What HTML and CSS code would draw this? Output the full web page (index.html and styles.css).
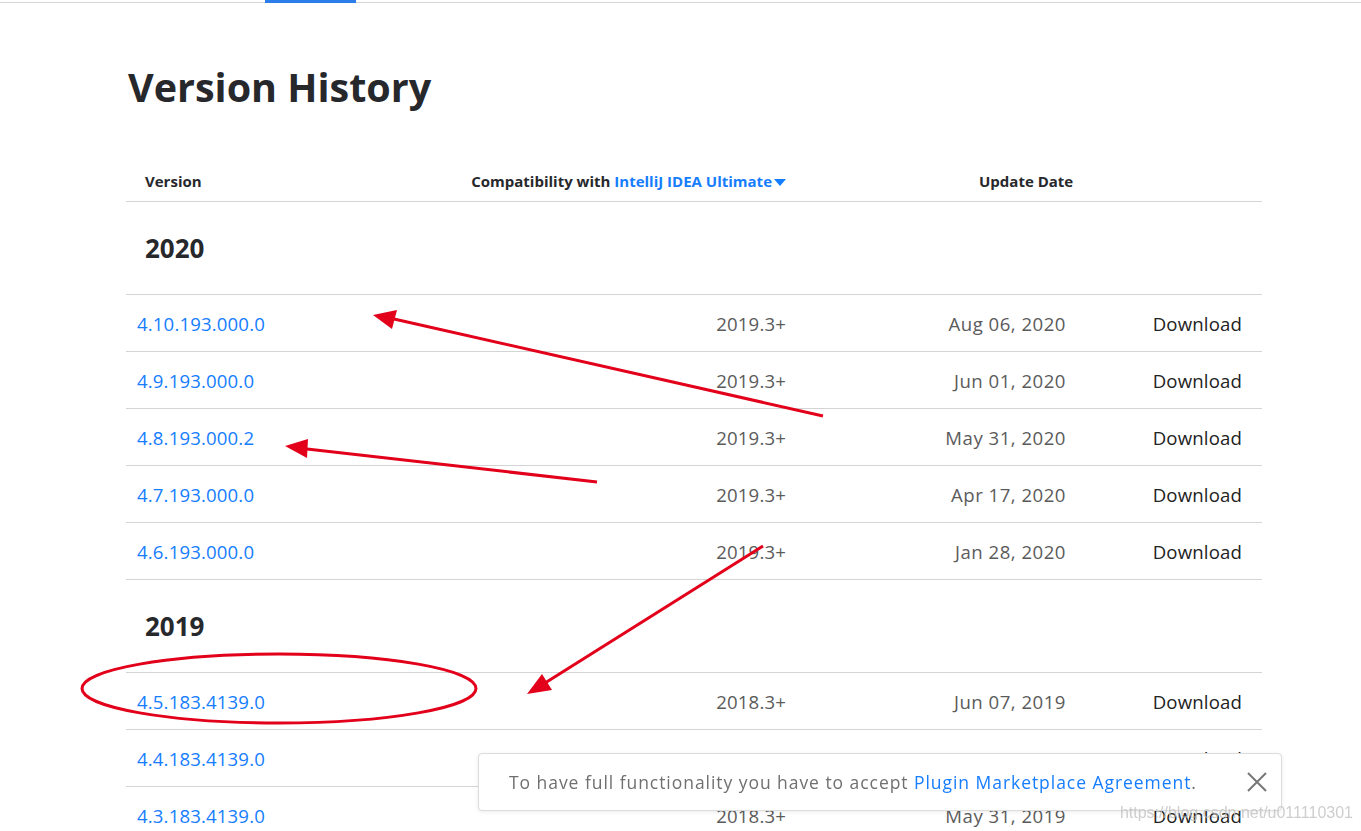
FILE: index.html
```html
<!DOCTYPE html>
<html lang="en">
<head>
<meta charset="utf-8">
<title>Version History</title>
<link rel="stylesheet" href="styles.css">
</head>
<body>
<nav class="topnav"><span class="tab"></span></nav>
<main class="main">
  <h1 class="title">Version History</h1>
  <div class="vtable">
    <div class="head">
      <div class="h-version">Version</div>
      <div class="h-compat">Compatibility with <a class="blue">IntelliJ IDEA Ultimate</a><span class="caret"></span></div>
      <div class="h-date">Update Date</div>
    </div>
    <div class="year">2020</div>
    <div class="row"><a class="ver">4.10.193.000.0</a><span class="compat">2019.3+</span><span class="date">Aug 06, 2020</span><span class="dl">Download</span></div>
    <div class="row"><a class="ver">4.9.193.000.0</a><span class="compat">2019.3+</span><span class="date">Jun 01, 2020</span><span class="dl">Download</span></div>
    <div class="row"><a class="ver">4.8.193.000.2</a><span class="compat">2019.3+</span><span class="date">May 31, 2020</span><span class="dl">Download</span></div>
    <div class="row"><a class="ver">4.7.193.000.0</a><span class="compat">2019.3+</span><span class="date">Apr 17, 2020</span><span class="dl">Download</span></div>
    <div class="row"><a class="ver">4.6.193.000.0</a><span class="compat">2019.3+</span><span class="date">Jan 28, 2020</span><span class="dl">Download</span></div>
    <div class="year">2019</div>
    <div class="row"><a class="ver">4.5.183.4139.0</a><span class="compat">2018.3+</span><span class="date">Jun 07, 2019</span><span class="dl">Download</span></div>
    <div class="row"><a class="ver">4.4.183.4139.0</a><span class="compat">2018.3+</span><span class="date">Jun 01, 2019</span><span class="dl">Download</span></div>
    <div class="row"><a class="ver">4.3.183.4139.0</a><span class="compat">2018.3+</span><span class="date">May 31, 2019</span><span class="dl">Download</span></div>
  </div>
</main>

<div class="notice">
  <span class="notice-text">To have full functionality you have to accept <a class="blue">Plugin Marketplace Agreement</a>.</span>
  <svg class="close" width="20" height="20" viewBox="0 0 20 20"><path d="M1 1 L19 19 M19 1 L1 19" stroke="#777" stroke-width="2" fill="none"/></svg>
</div>

<div class="watermark">https://blog.csdn.net/u011110301</div>

<svg class="annot" width="1361" height="831" viewBox="0 0 1361 831">
  <g stroke="#e2001a" stroke-width="3" fill="none">
    <line x1="823" y1="416" x2="394" y2="319"/>
    <line x1="597" y1="482" x2="307" y2="449"/>
    <line x1="763" y1="546" x2="545" y2="683"/>
    <ellipse cx="279" cy="688.5" rx="197" ry="34.5"/>
  </g>
  <g fill="#e2001a">
    <polygon points="373,315 397,310 392,329"/>
    <polygon points="285,446 308,439 307,458"/>
    <polygon points="527,694 542,674 552,690"/>
  </g>
</svg>
</body>
</html>
```
FILE: styles.css
```css
html, body {
  margin: 0;
  padding: 0;
  background: #fff;
}
body {
  font-family: "Open Sans", "Noto Sans", sans-serif;
  color: #27282c;
  overflow: hidden;
}
a { text-decoration: none; cursor: pointer; }
.blue { color: #167dff; }

.topnav {
  height: 2px;
  border-bottom: 1px solid #d4d4d4;
  padding-left: 265px;
  display: flex;
}
.tab {
  width: 91px;
  height: 3px;
  background: #2b7de9;
}

.main {
  width: 1136px;
  margin-left: 126px;
}
.title {
  margin: 56px 0 0 2px;
  font-size: 39.5px;
  line-height: 56px;
  font-weight: 700;
  color: #27282c;
  letter-spacing: 0;
}

.head {
  display: flex;
  align-items: center;
  height: 40px;
  margin-top: 46px;
  border-bottom: 1px solid #d4d4d4;
  font-size: 15px;
  font-weight: 700;
}
.h-version { width: 300px; padding-left: 19px; box-sizing: border-box; }
.h-compat { width: 360px; text-align: right; white-space: nowrap; }
.h-compat .blue { font-weight: 700; }
.caret {
  display: inline-block;
  width: 0; height: 0;
  border-left: 6px solid transparent;
  border-right: 6px solid transparent;
  border-top: 7px solid #167dff;
  margin-left: 2px;
  vertical-align: 1px;
}
.h-date { padding-left: 193px; }

.year {
  height: 92px;
  border-bottom: 1px solid #d4d4d4;
  display: flex;
  align-items: center;
  padding-left: 19px;
  font-size: 26px;
  font-weight: 700;
  color: #27282c;
}

.row {
  height: 56px;
  border-bottom: 1px solid #d4d4d4;
  display: flex;
  align-items: center;
  font-size: 18.6px;
  letter-spacing: 0.15px;
}
.ver {
  width: 420px;
  padding-left: 11px;
  box-sizing: border-box;
  color: #167dff;
}
.compat {
  width: 240px;
  text-align: right;
  color: #5b5b5b;
}
.date {
  width: 280px;
  text-align: right;
  color: #5b5b5b;
  letter-spacing: 0.5px;
}
.dl {
  width: 196px;
  text-align: right;
  padding-right: 20px;
  box-sizing: border-box;
  color: #222;
}

.notice {
  position: fixed;
  left: 478px;
  top: 753px;
  width: 804px;
  height: 58px;
  box-sizing: border-box;
  background: #fff;
  border: 1px solid #dcdcdc;
  border-radius: 4px;
  box-shadow: 0 1px 4px rgba(0,0,0,0.08);
  display: flex;
  align-items: center;
  justify-content: space-between;
  padding: 0 14px 0 30px;
}
.notice-text {
  font-size: 17.5px;
  letter-spacing: 0.95px;
  color: #707070;
}
.close { display: block; }

.watermark {
  position: fixed;
  right: 8px;
  bottom: 9px;
  font-family: "Liberation Sans", sans-serif;
  font-size: 16px;
  color: rgba(190,190,190,0.75);
}

.annot {
  position: absolute;
  left: 0;
  top: 0;
  pointer-events: none;
}
```
